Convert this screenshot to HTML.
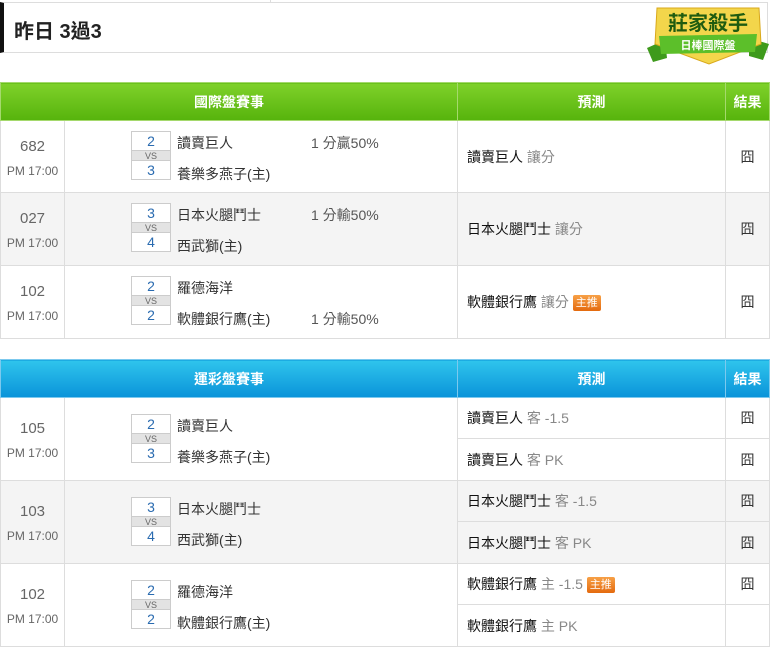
<!DOCTYPE html>
<html><head><meta charset="utf-8"><style>
*{margin:0;padding:0;box-sizing:border-box}
body{width:771px;height:647px;background:#fff;font-family:"Liberation Sans","Noto Sans CJK TC",sans-serif;position:relative;overflow:hidden;color:#222}
.hdr{position:absolute;left:0;top:2px;width:768px;height:51px;border:1px solid #ddd;border-left:4px solid #111}
.hdr span{position:absolute;left:10px;top:12px;font-size:20px;font-weight:bold;color:#222}
.topline{position:absolute;left:270px;top:0;width:1px;height:3px;background:#ddd}
table{position:absolute;left:0;width:769px;border-collapse:collapse;table-layout:fixed}
td,th{border:1px solid #ddd;font-size:14px}
th{color:#fff;font-weight:bold;height:38px;font-size:14px}
.g th{background:linear-gradient(#7fd12a,#56b30c);border-color:#a5d96d}
.b th{background:linear-gradient(#2fc4ec,#0a93d9);border-color:#7cc9ee}
.id{text-align:center;color:#666;font-size:15px;line-height:28px}
.id small{font-size:12px;display:block;line-height:20px}
.m{position:relative}
.sc{position:absolute;left:66px;width:40px;border:1px solid #ccc;background:#fff}
.sc div{height:18px;text-align:center;color:#2a6bb0;font-size:14px;line-height:18px}
.sc .vs{height:11px;background:#e3e3e3;color:#666;font-size:9px;line-height:11px;border-top:1px solid #ccc;border-bottom:1px solid #ccc}
.t{position:absolute;left:112px;font-size:14px;color:#333}
.o{position:absolute;left:246px;font-size:14px;color:#555}
.p{padding-left:9px;color:#111}
.p i{font-style:normal;color:#888}
.r{text-align:center;color:#333}
.tag{display:inline-block;background:linear-gradient(#f7a046,#e46a0e);color:#fff;font-size:11px;padding:0 3px;line-height:16px;border-radius:2px;vertical-align:1px}
.alt td{background:#f4f4f4}
</style></head><body>
<div class="topline"></div>
<div class="hdr"><span>昨日 3過3</span></div>
<svg style="position:absolute;left:645px;top:0" width="126" height="66" viewBox="0 0 126 66">
<path d="M2 48 L20 40 L22 58 L8 62Z" fill="#3e9a1c"/><path d="M124 44 L104 38 L104 56 L118 60Z" fill="#3e9a1c"/>
<path d="M12 8 L114 8 L116 44 L64 64 L10 44Z" fill="#f3d64b" stroke="#d9a81a"/>
<path d="M14 36 L112 34 L110 52 L16 54Z" fill="#5cbf2a"/>
<text x="63" y="30" text-anchor="middle" font-size="20" font-weight="bold" fill="#1f5c10" font-family="Noto Sans CJK TC">莊家殺手</text>
<text x="63" y="49" text-anchor="middle" font-size="11" font-weight="bold" fill="#fff" font-family="Noto Sans CJK TC">日棒國際盤</text>
</svg>
<table class="g" style="top:82px">
<colgroup><col style="width:64px"><col style="width:393px"><col style="width:268px"><col style="width:44px"></colgroup>
<tr><th colspan="2">國際盤賽事</th><th>預測</th><th>結果</th></tr>
<tr style="height:72px"><td class="id">682<small>PM 17:00</small></td><td class="m"><div class="sc" style="top:10px"><div>2</div><div class="vs">VS</div><div>3</div></div><span class="t" style="top:12px">讀賣巨人</span><span class="t" style="top:43px">養樂多燕子(主)</span><span class="o" style="top:12px">1 分贏50%</span></td><td class="p">讀賣巨人 <i>讓分</i></td><td class="r">囧</td></tr>
<tr class="alt" style="height:73px"><td class="id">027<small>PM 17:00</small></td><td class="m"><div class="sc" style="top:10px"><div>3</div><div class="vs">VS</div><div>4</div></div><span class="t" style="top:12px">日本火腿鬥士</span><span class="t" style="top:43px">西武獅(主)</span><span class="o" style="top:12px">1 分輸50%</span></td><td class="p">日本火腿鬥士 <i>讓分</i></td><td class="r">囧</td></tr>
<tr style="height:73px"><td class="id">102<small>PM 17:00</small></td><td class="m"><div class="sc" style="top:10px"><div>2</div><div class="vs">VS</div><div>2</div></div><span class="t" style="top:12px">羅德海洋</span><span class="t" style="top:43px">軟體銀行鷹(主)</span><span class="o" style="top:43px">1 分輸50%</span></td><td class="p">軟體銀行鷹 <i>讓分</i> <span class="tag">主推</span></td><td class="r">囧</td></tr>
</table>
<table class="b" style="top:359px">
<colgroup><col style="width:64px"><col style="width:393px"><col style="width:268px"><col style="width:44px"></colgroup>
<tr><th colspan="2">運彩盤賽事</th><th>預測</th><th>結果</th></tr>
<tr style="height:41px"><td class="id" rowspan="2">105<small>PM 17:00</small></td><td class="m" rowspan="2"><div class="sc" style="top:16px"><div>2</div><div class="vs">VS</div><div>3</div></div><span class="t" style="top:18px">讀賣巨人</span><span class="t" style="top:49px">養樂多燕子(主)</span></td><td class="p">讀賣巨人 <i>客 -1.5</i></td><td class="r">囧</td></tr>
<tr style="height:42px"><td class="p">讀賣巨人 <i>客 PK</i></td><td class="r">囧</td></tr>
<tr class="alt" style="height:41px"><td class="id" rowspan="2">103<small>PM 17:00</small></td><td class="m" rowspan="2"><div class="sc" style="top:16px"><div>3</div><div class="vs">VS</div><div>4</div></div><span class="t" style="top:18px">日本火腿鬥士</span><span class="t" style="top:49px">西武獅(主)</span></td><td class="p">日本火腿鬥士 <i>客 -1.5</i></td><td class="r">囧</td></tr>
<tr class="alt" style="height:42px"><td class="p">日本火腿鬥士 <i>客 PK</i></td><td class="r">囧</td></tr>
<tr style="height:41px"><td class="id" rowspan="2">102<small>PM 17:00</small></td><td class="m" rowspan="2"><div class="sc" style="top:16px"><div>2</div><div class="vs">VS</div><div>2</div></div><span class="t" style="top:18px">羅德海洋</span><span class="t" style="top:49px">軟體銀行鷹(主)</span></td><td class="p">軟體銀行鷹 <i>主 -1.5</i> <span class="tag">主推</span></td><td class="r">囧</td></tr>
<tr style="height:42px"><td class="p">軟體銀行鷹 <i>主 PK</i></td><td class="r"></td></tr>
</table>
</body></html>
